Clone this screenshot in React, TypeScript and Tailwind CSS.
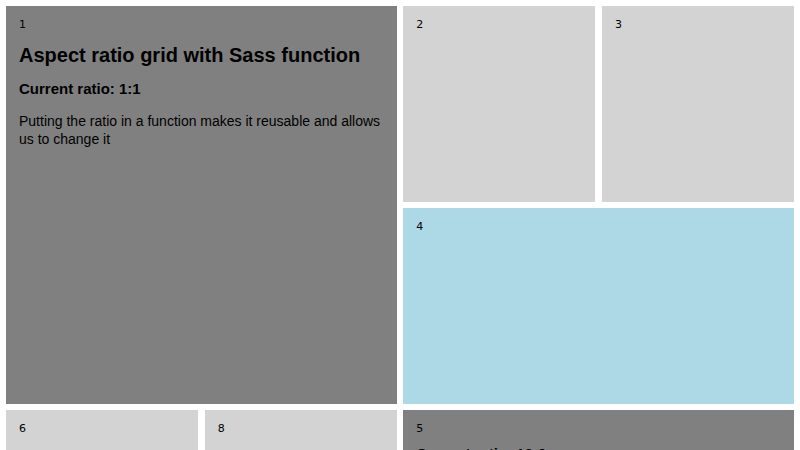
import type { ReactNode } from 'react';

type Tile = {
  id: number;
  bg: string;
  span: string;
  children?: ReactNode;
};

const tiles: Tile[] = [
  {
    id: 1,
    bg: 'bg-[#808080]',
    span: 'col-span-2 row-span-2',
    children: (
      <>
        <h1 className="mt-[11.5px] text-[20px] font-bold leading-[24px]">Aspect ratio grid with Sass function</h1>
        <h2 className="mt-[13px] text-[15px] font-bold leading-[18px]">Current ratio: 1:1</h2>
        <p className="mt-[14px] text-[14px] leading-[18px]">
          Putting the ratio in a function makes it reusable and allows us to change it
        </p>
      </>
    ),
  },
  { id: 2, bg: 'bg-[#d3d3d3]', span: '' },
  { id: 3, bg: 'bg-[#d3d3d3]', span: '' },
  { id: 4, bg: 'bg-[#add8e6]', span: 'col-span-2' },
  { id: 6, bg: 'bg-[#d3d3d3]', span: '' },
  { id: 8, bg: 'bg-[#d3d3d3]', span: '' },
  {
    id: 5,
    bg: 'bg-[#808080]',
    span: 'col-span-2',
    children: (
      <h2 className="mt-[9.5px] text-[15px] font-bold leading-[18px]">Current ratio: 16:9</h2>
    ),
  },
  { id: 7, bg: 'bg-[#d3d3d3]', span: '' },
];

export default function App() {
  return (
    <div className="min-h-screen bg-white p-[6px] font-['Liberation_Sans',Arial,sans-serif] text-black">
      <div className="grid grid-cols-4 auto-rows-[195.5px] gap-[6.5px]">
        {tiles.map((tile) => (
          <div key={tile.id} className={`${tile.bg} ${tile.span} px-[13px] pt-[12px]`}>
            <div className="font-['DejaVu_Sans',sans-serif] text-[11px] leading-[13px]">{tile.id}</div>
            {tile.children}
          </div>
        ))}
      </div>
    </div>
  );
}
